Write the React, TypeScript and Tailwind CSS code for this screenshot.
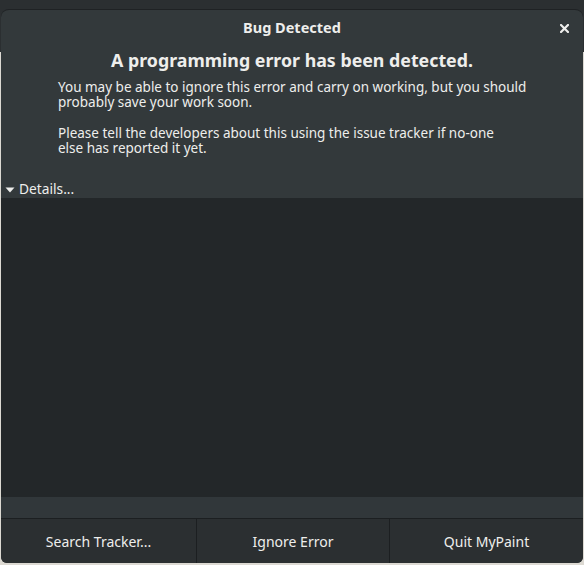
import React from "react";

export default function App() {
  const font = { fontFamily: '"Noto Sans", "Open Sans", sans-serif' };
  return (
    <div className="w-[584px] h-[565px] bg-[#dcd9d2] relative overflow-hidden" style={font}>
      <div className="h-[52px] bg-[#2b2f31]" />
      <div className="absolute left-[1px] top-[9px] w-[582px] h-[554px] flex flex-col bg-[#33393b] rounded-t-[8px] rounded-b-[6px] border-t border-[#1f2224] overflow-hidden">
        <div className="h-[35px] flex items-center justify-center relative">
          <span className="text-[14.5px] font-bold text-[#eeeeec]">Bug Detected</span>
          <span className="absolute right-[14px] top-[14px]">
            <svg width="9" height="9" viewBox="0 0 9 9" className="block">
              <path d="M1 1 L8 8 M8 1 L1 8" stroke="#eeeeec" strokeWidth="2.2" strokeLinecap="square" />
            </svg>
          </span>
        </div>
        <div className="text-center text-[17.8px] font-bold text-[#eeeeec] leading-[20px] mt-[5px]">
          A programming error has been detected.
        </div>
        <div className="pl-[57px] pr-[20px] mt-[10px] text-[13.5px] leading-[15px] text-[#eeeeec]">
          <p>
            You may be able to ignore this error and carry on working, but you should
            <br />
            probably save your work soon.
          </p>
          <p className="mt-[16px]">
            Please tell the developers about this using the issue tracker if no-one
            <br />
            else has reported it yet.
          </p>
        </div>
        <div className="mt-[25px] h-[17px] flex items-center pl-[4px] text-[13.75px] text-[#eeeeec]">
          <svg width="10" height="10" viewBox="0 0 10 10" className="mr-[4px]">
            <path d="M0.5 2.5 L9.5 2.5 L5 7.5 Z" fill="#eeeeec" />
          </svg>
          <span>Details...</span>
        </div>
        <div className="h-[299px] bg-[#232729]" />
        <div className="h-[21px] bg-[#31373a]" />
        <div className="flex-1 grid grid-cols-[195px_193px_1fr] border-t border-[#1c1f21] bg-[#2b2f31] text-[14px] text-[#eeeeec]">
          <div className="flex items-center justify-center">Search Tracker...</div>
          <div className="flex items-center justify-center border-l border-[#1c1f21]">Ignore Error</div>
          <div className="flex items-center justify-center border-l border-[#1c1f21]">Quit MyPaint</div>
        </div>
      </div>
    </div>
  );
}
